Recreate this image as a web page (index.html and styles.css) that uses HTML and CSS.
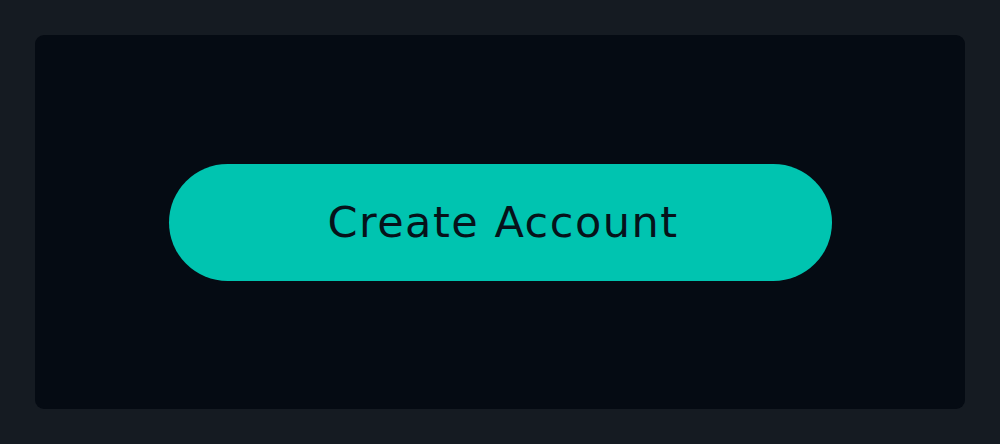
FILE: index.html
```html
<!DOCTYPE html>
<html lang="en">

<head>
    <meta charset="utf-8">
    <title>Create Account</title>
    <link rel="stylesheet" href="styles.css">
</head>

<body>
    <div class="panel">
        <button class="create-button">Create Account</button>
    </div>
</body>

</html>
```

FILE: styles.css
```css
html,
body {
    height: 100%;
}

body {
    margin: 0;
    padding: 35px;
    box-sizing: border-box;
    background-color: #151b22;
    font-family: 'DejaVu Sans', 'Noto Sans', sans-serif;
    overflow: hidden;
}

.panel {
    height: 374px;
    background-color: #050b13;
    border-radius: 9px;
    display: flex;
    align-items: center;
    justify-content: center;
}

.create-button {
    width: 663px;
    height: 117px;
    border: none;
    border-radius: 59px;
    background-color: #00c4b0;
    color: #06121a;
    font-family: inherit;
    font-size: 43px;
    letter-spacing: 1.5px;
    padding: 0 0 0 6px;
    cursor: pointer;
}
```
